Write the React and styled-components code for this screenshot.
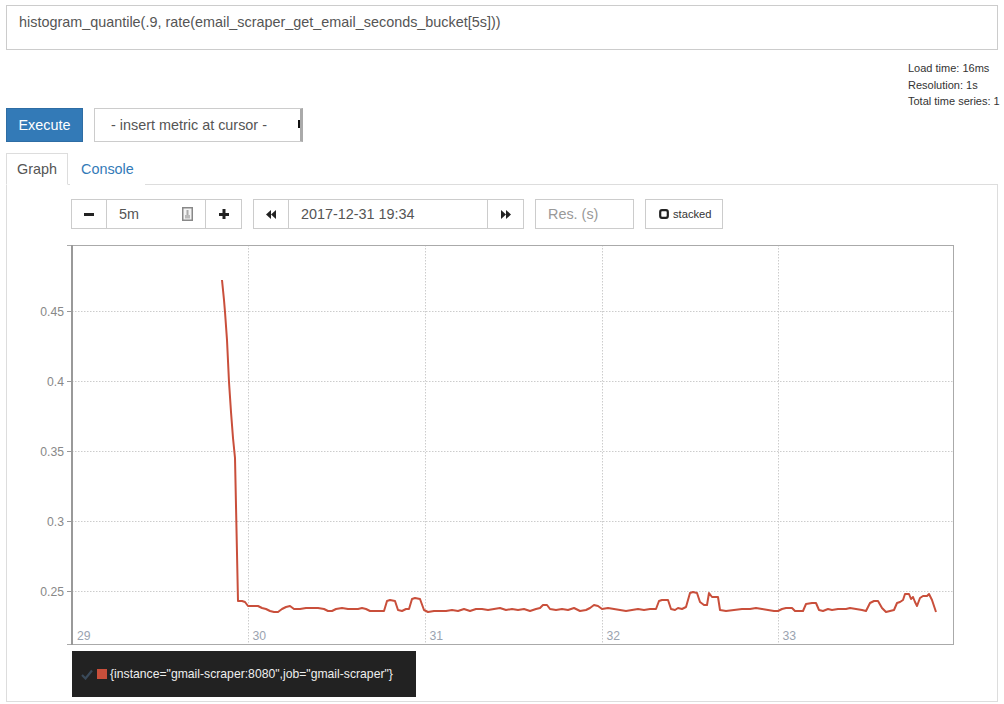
import React from 'react';
import styled, { createGlobalStyle } from 'styled-components';

const GlobalStyle = createGlobalStyle`
  html, body {
    margin: 0;
    padding: 0;
    background: #fff;
    font-family: "Liberation Sans", Arial, sans-serif;
    font-size: 14px;
    color: #333;
  }
  * { box-sizing: border-box; }
`;

const series = [
  [222, 280], [224, 300], [225, 312], [227, 340], [229, 382], [231, 412], [233, 438], [235, 458],
  [238, 601], [242, 601], [245, 602], [248, 606], [252, 606], [258, 606], [262, 608], [266, 609],
  [270, 611], [274, 612], [278, 612], [282, 609], [286, 607], [290, 606], [294, 609], [300, 609],
  [306, 608], [312, 608], [318, 608], [324, 609], [328, 611], [332, 611], [336, 609], [342, 608],
  [348, 609], [354, 609], [358, 609], [362, 608], [366, 609], [370, 611], [376, 611], [384, 611],
  [387, 601], [390, 600], [395, 601], [398, 610], [402, 611], [406, 609], [409, 609], [412, 599],
  [415, 598], [420, 599], [424, 610], [428, 612], [434, 611], [440, 611], [446, 611], [452, 610],
  [458, 611], [464, 609], [470, 611], [476, 609], [482, 609], [488, 610], [494, 609], [500, 608],
  [506, 610], [512, 609], [518, 610], [524, 609], [530, 611], [536, 609], [540, 608], [543, 605],
  [547, 605], [550, 609], [556, 610], [562, 609], [568, 610], [574, 608], [580, 611], [586, 610],
  [590, 608], [594, 605], [598, 606], [602, 609], [608, 608], [614, 609], [620, 610], [626, 611],
  [632, 610], [638, 609], [644, 610], [650, 609], [656, 609], [659, 601], [662, 600], [668, 600],
  [671, 609], [675, 610], [678, 608], [682, 609], [686, 607], [688, 600], [690, 593], [693, 592],
  [697, 593], [700, 602], [704, 605], [707, 605], [709, 593], [712, 597], [718, 597], [720, 610],
  [726, 611], [734, 610], [742, 609], [750, 609], [756, 608], [762, 609], [768, 610], [774, 611],
  [778, 611], [782, 609], [786, 608], [792, 608], [795, 611], [800, 611], [803, 611], [806, 604],
  [812, 603], [816, 603], [819, 610], [823, 611], [828, 609], [832, 610], [838, 609], [842, 609],
  [846, 609], [850, 608], [856, 609], [862, 610], [866, 611], [870, 603], [874, 601], [878, 601],
  [882, 608], [886, 612], [890, 611], [894, 610], [897, 603], [900, 602], [903, 600], [905, 594],
  [909, 594], [911, 599], [913, 597], [915, 602], [917, 606], [920, 598], [923, 596], [927, 596],
  [929, 594], [932, 600], [936, 612],
];

const yTicks = [
  { label: '0.45', y: 311.5 },
  { label: '0.4', y: 381.5 },
  { label: '0.35', y: 451.5 },
  { label: '0.3', y: 521.5 },
  { label: '0.25', y: 591.5 },
];

const xTicks = [
  { label: '30', x: 248.5 },
  { label: '31', x: 425.5 },
  { label: '32', x: 602.5 },
  { label: '33', x: 778.5 },
];

const Page = styled.div`
  padding: 5px 6px 0;
`;

const QueryBox = styled.div`
  height: 45px;
  border: 1px solid #ccc;
  padding: 6px 12px;
  font-size: 14.4px;
  line-height: 20px;
  color: #555;
  background: #fff;
`;

const StatsRow = styled.div`
  display: flex;
  justify-content: flex-end;
  margin-top: 10px;
`;

const Stats = styled.div`
  width: 90px;
  white-space: nowrap;
  font-size: 11px;
  line-height: 16.5px;
  color: #333;
`;

const ActionRow = styled.div`
  display: flex;
  gap: 11px;
  margin-top: -1.5px;
  height: 34px;
`;

const PrimaryButton = styled.button`
  font-family: inherit;
  font-size: 14.4px;
  line-height: 20px;
  padding: 6px 0;
  color: #fff;
  background: #337ab7;
  border: 1px solid #2e6da4;
  border-radius: 0;
  width: 77px;
`;

const MetricSelect = styled.div`
  position: relative;
  width: 209px;
  height: 34px;
  border: 1px solid #ccc;
  border-right: 3px solid #aaa;
  padding: 6px 16px;
  font-size: 14.4px;
  line-height: 20px;
  color: #555;
  background: #fff;
  white-space: nowrap;

  &::after {
    content: '';
    position: absolute;
    right: 0;
    top: 11px;
    width: 2px;
    height: 8px;
    background: #111;
  }
`;

const Tabs = styled.div`
  display: flex;
  margin-top: 11px;
  border-bottom: 1px solid #ddd;
  height: 32px;
`;

const Tab = styled.div`
  padding: 5px 10px;
  margin-right: 2px;
  line-height: 20px;
  font-size: 14.4px;
  height: 32px;
  color: ${p => (p.$active ? '#555' : '#337ab7')};
  background: #fff;
  border: 1px solid ${p => (p.$active ? '#ddd' : 'transparent')};
  border-bottom-color: ${p => (p.$active ? '#fff' : 'transparent')};
  width: ${p => (p.$active ? '62px' : 'auto')};
`;

const Panel = styled.div`
  border: 1px solid #ddd;
  border-top: none;
  padding: 15px 0 4px;
  margin-top: -1px;
`;

const Controls = styled.div`
  display: flex;
  gap: 11px;
  margin-left: 64px;
  height: 30px;
`;

const Group = styled.div`
  display: flex;
  height: 30px;
`;

const IconButton = styled.div`
  width: ${p => (p.$joined ? '37px' : '36px')};
  height: 30px;
  border: 1px solid #ccc;
  background: #fff;
  display: flex;
  align-items: center;
  justify-content: center;
  margin-left: ${p => (p.$joined ? '-1px' : '0')};
`;

const Field = styled.div`
  width: ${p => p.$w}px;
  height: 30px;
  border: 1px solid #ccc;
  margin-left: ${p => (p.$joined ? '-1px' : '0')};
  padding: 0 12px;
  display: flex;
  align-items: center;
  justify-content: space-between;
  font-size: 14.4px;
  color: ${p => (p.$placeholder ? '#999' : '#555')};
  background: #fff;
`;

const StackedButton = styled.div`
  width: 78px;
  height: 30px;
  border: 1px solid #ccc;
  display: flex;
  align-items: center;
  padding-left: 13px;
  gap: 4px;
  font-size: 11.2px;
  color: #333;
`;

const Chart = styled.svg`
  display: block;
  margin-top: 16px;
`;

const Legend = styled.div`
  margin: 4px 0 0 65px;
  width: 344px;
  height: 46px;
  background: #222;
  display: flex;
  align-items: center;
  padding-left: 9px;
  font-size: 12.2px;
  color: #eee;
  white-space: nowrap;
`;

const Swatch = styled.span`
  display: inline-block;
  width: 10px;
  height: 10px;
  background: #c94f3b;
  margin: 0 3px 0 4px;
`;

const Minus = () => (
  <svg width="12" height="12" viewBox="0 0 12 12"><rect x="1" y="5" width="10" height="3" fill="#222" /></svg>
);

const PlusIcon = () => (
  <svg width="12" height="12" viewBox="0 0 12 12">
    <rect x="1" y="5" width="10" height="3" fill="#222" />
    <rect x="4.5" y="1" width="3" height="10" fill="#222" />
  </svg>
);

const Backward = () => (
  <svg width="10" height="9" viewBox="0 0 10 9">
    <polygon points="0,4.5 5,0 5,9" fill="#222" />
    <polygon points="5,4.5 10,0 10,9" fill="#222" />
  </svg>
);

const Forward = () => (
  <svg width="10" height="9" viewBox="0 0 10 9">
    <polygon points="0,0 5,4.5 0,9" fill="#222" />
    <polygon points="5,0 10,4.5 5,9" fill="#222" />
  </svg>
);

const DurationIcon = () => (
  <svg width="11" height="14" viewBox="0 0 11 14">
    <rect x="0.75" y="0.75" width="9.5" height="12.5" fill="#f4f4f4" stroke="#888" strokeWidth="1.5" />
    <rect x="3" y="8" width="5" height="3.5" fill="#bbb" />
    <rect x="4.5" y="3" width="2" height="5" fill="#aaa" />
  </svg>
);

const CheckboxIcon = () => (
  <svg width="10" height="10" viewBox="0 0 10 10">
    <rect x="1.2" y="1.2" width="7.6" height="7.6" rx="1.8" fill="none" stroke="#222" strokeWidth="2.2" />
  </svg>
);

const CheckMark = () => (
  <svg width="12" height="11" viewBox="0 0 12 11">
    <path d="M1 6 L4.5 9.5 L11 1.5" fill="none" stroke="#3a4a5a" strokeWidth="2.2" />
  </svg>
);

const linePath = series.map(([x, y], i) => `${i ? 'L' : 'M'}${x} ${y}`).join(' ');

const Graph = () => (
  <Chart width="990" height="402" viewBox="7 245 990 402">
    {yTicks.map(t => (
      <g key={t.label}>
        <line x1="72" x2="954" y1={t.y} y2={t.y} stroke="#ccc" strokeDasharray="1.5 1.5" />
        <line x1="67" x2="72" y1={t.y} y2={t.y} stroke="#999" />
        <text x="64" y={t.y + 4.5} textAnchor="end" fontSize="12.2" fill="#888" fontFamily="Liberation Sans, Arial, sans-serif">{t.label}</text>
      </g>
    ))}
    {xTicks.map(t => (
      <line key={t.label} x1={t.x} x2={t.x} y1="245" y2="645" stroke="#ccc" strokeDasharray="1.5 1.5" />
    ))}
    <text x="77" y="640" fontSize="12.2" fill="#9aa3b0" fontFamily="Liberation Sans, Arial, sans-serif">29</text>
    {xTicks.map(t => (
      <text key={t.label} x={t.x + 4} y="640" fontSize="12.2" fill="#9aa3b0" fontFamily="Liberation Sans, Arial, sans-serif">{t.label}</text>
    ))}
    <line x1="67" x2="954" y1="245.5" y2="245.5" stroke="#aaa" />
    <line x1="953.5" x2="953.5" y1="245" y2="645" stroke="#aaa" />
    <line x1="67" x2="954" y1="644.5" y2="644.5" stroke="#aaa" />
    <line x1="72" x2="72" y1="245" y2="645" stroke="#999" strokeWidth="2" />
    <path d={linePath} fill="none" stroke="#c94f3b" strokeWidth="2" strokeLinejoin="round" />
  </Chart>
);

export default function App() {
  return (
    <Page>
      <GlobalStyle />
      <QueryBox>histogram_quantile(.9, rate(email_scraper_get_email_seconds_bucket[5s]))</QueryBox>
      <StatsRow>
        <Stats>
          <div>Load time: 16ms</div>
          <div>Resolution: 1s</div>
          <div>Total time series: 1</div>
        </Stats>
      </StatsRow>
      <ActionRow>
        <PrimaryButton>Execute</PrimaryButton>
        <MetricSelect>- insert metric at cursor -</MetricSelect>
      </ActionRow>
      <Tabs>
        <Tab $active>Graph</Tab>
        <Tab>Console</Tab>
      </Tabs>
      <Panel>
        <Controls>
          <Group>
            <IconButton><Minus /></IconButton>
            <Field $w={100} $joined>
              <span>5m</span>
              <DurationIcon />
            </Field>
            <IconButton $joined><PlusIcon /></IconButton>
          </Group>
          <Group>
            <IconButton><Backward /></IconButton>
            <Field $w={200} $joined>2017-12-31 19:34</Field>
            <IconButton $joined><Forward /></IconButton>
          </Group>
          <Field $w={99} $placeholder>Res. (s)</Field>
          <StackedButton>
            <CheckboxIcon />
            stacked
          </StackedButton>
        </Controls>
        <Graph />
        <Legend>
          <CheckMark />
          <Swatch />
          {'{instance="gmail-scraper:8080",job="gmail-scraper"}'}
        </Legend>
      </Panel>
    </Page>
  );
}
